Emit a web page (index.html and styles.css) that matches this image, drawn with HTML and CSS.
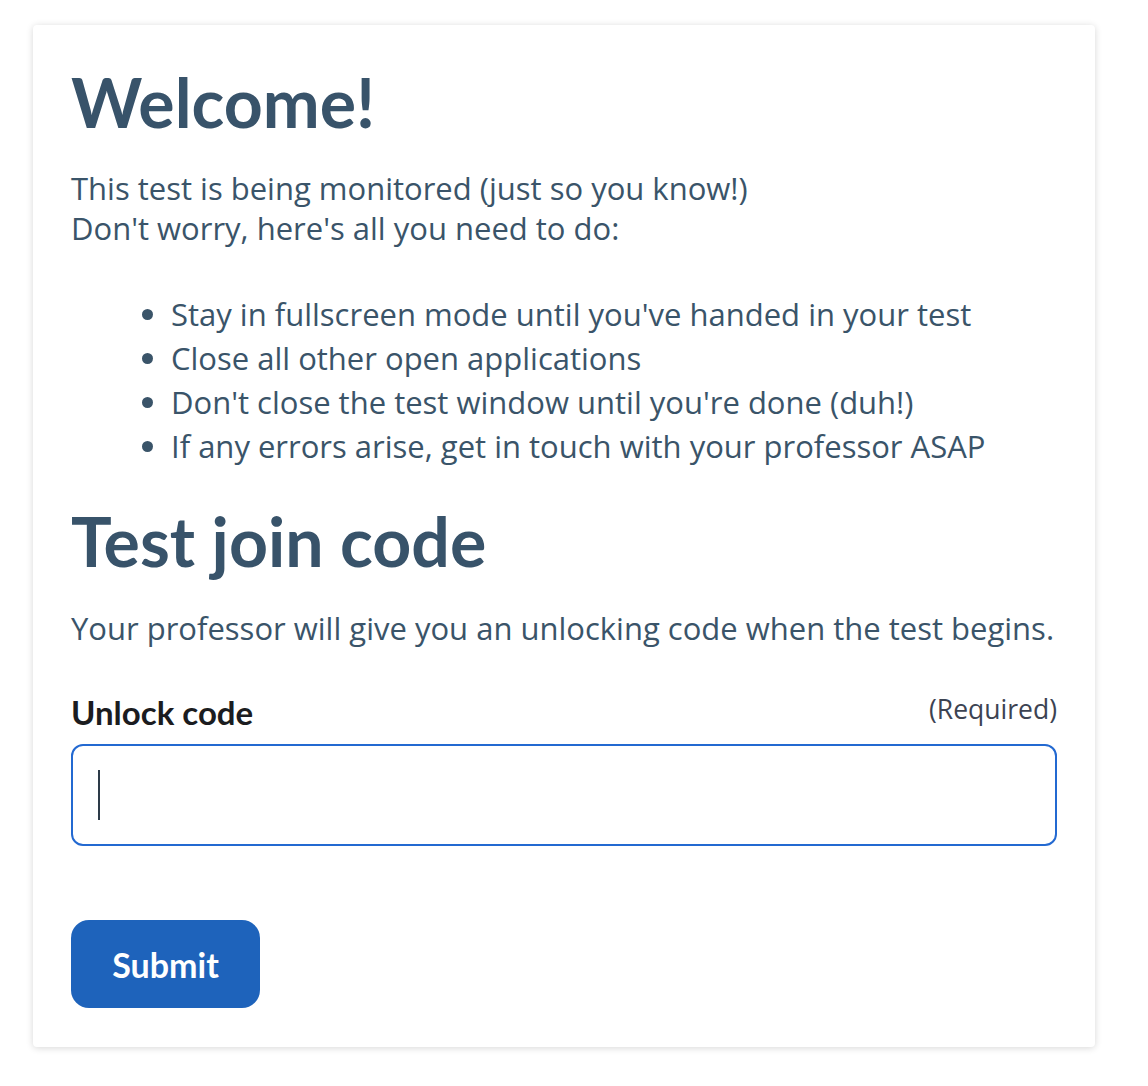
FILE: index.html
```html
<!DOCTYPE HTML>
<html lang="en">
  <head>
    <title>Test lockdown</title>
    <meta charset="utf-8">
    <link rel="stylesheet" href="styles.css">
  </head>
  <body>

  <div class="card">
    <h1 class="title">Welcome!</h1>
    <p class="intro">
      This test is being monitored (just so you know!)<br>
      Don't worry, here's all you need to do:
    </p>

    <ul class="rules">
      <li>Stay in fullscreen mode until you've handed in your test</li>
      <li>Close all other open applications</li>
      <li>Don't close the test window until you're done (duh!)</li>
      <li>If any errors arise, get in touch with your professor ASAP</li>
    </ul>

    <h2 class="title">Test join code</h2>
    <p class="hint">Your professor will give you an unlocking code when the test begins.</p>

    <div class="label-row">
      <label for="code" class="label">Unlock code</label>
      <span class="required">(Required)</span>
    </div>
    <div class="field">
      <input id="code" type="text" class="code-input" autocomplete="off">
      <span class="caret"></span>
    </div>

    <button class="submit" type="button">Submit</button>
  </div>

  </body>
</html>
```

FILE: styles.css
```css
html {
  height: 100%;
}
body {
  margin: 0;
  padding: 25px 53px 39px 33px;
  background: #ffffff;
  color: #3a5469;
  font-family: "Open Sans", "Noto Sans", sans-serif;
}

.card {
  background-color: #fff;
  border-radius: 4px;
  box-shadow: 0 1px 7px rgba(0,0,0,0.16);
  padding: 43px 38px 39px 38px;
}

.title {
  margin: 0;
  font-family: Lato, sans-serif;
  font-size: 68px;
  line-height: 68px;
  font-weight: 700;
  color: #38536a;
}

.intro {
  margin: 32px 0 0 0;
  font-size: 31px;
  line-height: 40px;
}

.rules {
  margin: 44px 0 0 0;
  padding-left: 100px;
  font-size: 31px;
  line-height: 44px;
}

h2.title {
  margin-top: 39px;
}

.hint {
  margin: 33px 0 0 0;
  font-size: 31px;
  line-height: 40px;
}

.label-row {
  display: flex;
  justify-content: space-between;
  align-items: flex-start;
  margin-top: 46px;
}

.label {
  font-family: Lato, sans-serif;
  font-size: 33px;
  line-height: 36px;
  font-weight: 700;
  color: #1b1c20;
}

.required {
  font-size: 26.5px;
  line-height: 30px;
  color: #3c4352;
}

.field {
  position: relative;
  margin-top: 14px;
}

.code-input {
  display: block;
  box-sizing: border-box;
  width: 100%;
  height: 102px;
  margin: 0;
  padding: 0 26px;
  border: 2px solid #2369d1;
  border-radius: 12px;
  background: #fff;
  font: 30px "Open Sans", sans-serif;
  color: #1b1c20;
  caret-color: transparent;
  outline: none;
}

.caret {
  position: absolute;
  left: 27px;
  top: 26px;
  width: 2px;
  height: 50px;
  background: #2d3b48;
}

.submit {
  display: block;
  margin-top: 74px;
  width: 189px;
  height: 88px;
  border: 0;
  border-radius: 18px;
  background-color: #1e63bb;
  color: #fff;
  font: 700 34px Lato, sans-serif;
  cursor: pointer;
}
```
